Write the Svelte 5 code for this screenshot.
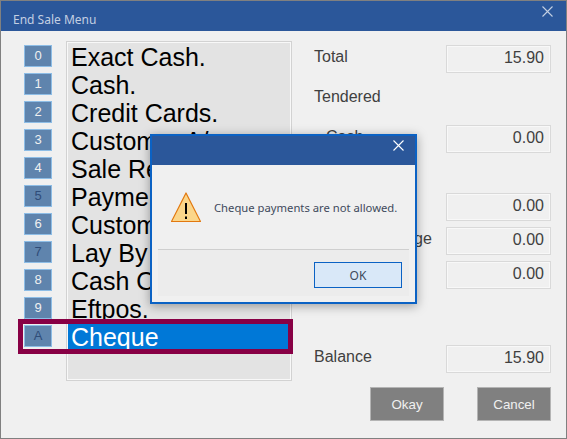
<script>
  const items = [
    { key: '0', label: 'Exact Cash.' },
    { key: '1', label: 'Cash.' },
    { key: '2', label: 'Credit Cards.' },
    { key: '3', label: 'Customer A/c.' },
    { key: '4', label: 'Sale Returns.' },
    { key: '5', label: 'Payment Plan.', off: true },
    { key: '6', label: 'Customer Deposit.' },
    { key: '7', label: 'Lay By Payment.', off: true },
    { key: '8', label: 'Cash Out.' },
    { key: '9', label: 'Eftpos.' },
    { key: 'A', label: 'Cheque', off: true, selected: true }
  ];
</script>

<div class="window">
  <header class="titlebar">
    <span class="title">End Sale Menu</span>
    <svg class="close dim" viewBox="0 0 11 11" width="11" height="11"><path d="M.5.5l10 10M10.5.5l-10 10" /></svg>
  </header>

  <main class="body">
    <div class="keys">
      {#each items as item}
        <div class="key" class:off={item.off}>{item.key}</div>
      {/each}
    </div>

    <div class="list">
      {#each items as item}
        <div class="row" class:selected={item.selected}>{item.label}</div>
      {/each}
    </div>

    <div class="totals">
      <div class="line total"><span>Total</span><output>15.90</output></div>
      <div class="line tendered"><span>Tendered</span></div>
      <div class="line cash indent"><span>Cash</span><output>0.00</output></div>
      <div class="line r1 indent"><span></span><output>0.00</output></div>
      <div class="line r2 indent"><span>Tender Charge</span><output>0.00</output></div>
      <div class="line r2 indent"><span></span><output>0.00</output></div>
      <div class="line balance"><span>Balance</span><output>15.90</output></div>
      <div class="actions">
        <button>Okay</button>
        <button>Cancel</button>
      </div>
    </div>
  </main>

  <div class="highlight"></div>

  <div class="dialog">
    <header class="dialog-title">
      <svg class="close" viewBox="0 0 11 11" width="11" height="11"><path d="M.5.5l10 10M10.5.5l-10 10" /></svg>
    </header>
    <div class="message">
      <svg class="warn" viewBox="0 0 30 30" width="30" height="30">
        <path class="tri" d="M15 1L29.5 29.5H.5Z" />
        <path class="bang" d="M15 11v11M15 24.5v2.5" />
      </svg>
      <p>Cheque payments are not allowed.</p>
    </div>
    <footer class="dialog-foot">
      <button class="ok">OK</button>
    </footer>
  </div>
</div>

<style>
  :global(body) {
    margin: 0;
    background: #f0f0f0;
  }
  .window {
    position: relative;
    box-sizing: border-box;
    width: 567px;
    height: 439px;
    border: 1px solid #808080;
    background: #f0f0f0;
    font-family: "Liberation Sans", Arial, sans-serif;
    overflow: hidden;
  }
  .titlebar {
    display: flex;
    align-items: center;
    justify-content: space-between;
    height: 30px;
    padding: 0 13px 0 12px;
    background: #2b579a;
  }
  .title {
    color: #c3cfe2;
    font: 12px "Noto Sans", sans-serif;
    position: relative;
    top: 3px;
  }
  .close {
    fill: none;
    stroke: #fff;
    stroke-width: 1.1;
  }
  .close.dim {
    stroke: #c3cfe2;
    margin-top: -9px;
  }
  .body {
    display: flex;
    padding-top: 10px;
  }
  .keys {
    display: flex;
    flex-direction: column;
    gap: 6px;
    width: 28px;
    margin: 4px 0 0 23px;
  }
  .key {
    box-sizing: border-box;
    width: 28px;
    height: 22px;
    border: 1px solid #8dbde6;
    background: #5f84ad;
    color: #f0f0f0;
    font-size: 13px;
    line-height: 20px;
    text-align: center;
  }
  .key.off {
    color: #2f4c78;
  }
  .list {
    box-sizing: border-box;
    width: 226px;
    height: 340px;
    margin-left: 14px;
    padding-top: 1px;
    background: #e3e3e3;
    border: 1px solid #d2d2d2;
    box-shadow: inset 0 0 0 1px #f8f8f8;
  }
  .row {
    box-sizing: border-box;
    height: 28px;
    padding: 0 0 0 3px;
    margin-left: 1px;
    margin-right: 1px;
    color: #000;
    font-size: 25px;
    line-height: 28px;
    white-space: nowrap;
    overflow: hidden;
  }
  .row.selected {
    background: #0078d7;
    color: #fff;
  }
  .totals {
    display: flex;
    flex-direction: column;
    width: 237px;
    margin: 4px 0 0 22px;
    color: #404040;
    font-size: 16px;
  }
  .line {
    display: flex;
    justify-content: space-between;
    align-items: center;
    height: 28px;
  }
  .line span {
    white-space: nowrap;
    margin-top: -5px;
  }
  .line output {
    box-sizing: border-box;
    width: 105px;
    height: 28px;
    border: 1px solid #d9d9d9;
    box-shadow: inset 0 0 0 1px #f8f8f8;
    padding-right: 6px;
    font-size: 16px;
    line-height: 24px;
    text-align: right;
  }
  .indent {
    padding-left: 12px;
  }
  .tendered { margin-top: 12px; }
  .cash { margin-top: 12px; }
  .r1 { margin-top: 40px; }
  .r2 { margin-top: 6px; }
  .balance { margin-top: 56px; }
  .actions {
    display: flex;
    justify-content: flex-end;
    gap: 33px;
    margin-top: 14px;
  }
  .actions button {
    box-sizing: border-box;
    width: 74px;
    height: 34px;
    padding: 0;
    border: 1px solid #b4b4b4;
    background: #808080;
    color: #f0f0f0;
    font: 13.33px "Liberation Sans", Arial, sans-serif;
  }
  .highlight {
    position: absolute;
    left: 17px;
    top: 318px;
    width: 275px;
    height: 35px;
    box-sizing: border-box;
    border: 5px solid #880045;
    pointer-events: none;
  }
  .dialog {
    position: absolute;
    left: 149px;
    top: 133px;
    box-sizing: border-box;
    width: 267px;
    height: 170px;
    border: 2px solid #0b62c4;
    background: #f0f0f0;
    box-shadow: 0 2px 10px rgba(0, 0, 0, 0.35);
    display: flex;
    flex-direction: column;
  }
  .dialog-title {
    box-sizing: border-box;
    display: flex;
    justify-content: flex-end;
    align-items: flex-start;
    flex: none;
    height: 29px;
    padding: 4px 11px 0 0;
    background: #2b579a;
  }
  .message {
    display: flex;
    align-items: center;
    gap: 13px;
    flex: none;
    height: 84px;
    padding-left: 19px;
  }
  .warn {
    flex: none;
  }
  .tri {
    fill: #fbd68a;
    stroke: #e2780f;
    stroke-width: 1.2;
    stroke-linejoin: round;
  }
  .bang {
    fill: none;
    stroke: #000;
    stroke-width: 2;
  }
  .message p {
    margin: 0;
    color: #404a5c;
    font: 11.25px "Noto Sans", sans-serif;
    white-space: nowrap;
  }
  .dialog-foot {
    box-sizing: border-box;
    display: flex;
    justify-content: flex-end;
    align-items: flex-start;
    flex: none;
    height: 47px;
    margin: 0 6px;
    padding: 12px 7px 0 0;
    border-top: 1px solid #cfcfcf;
    background: #ececec;
  }
  .ok {
    box-sizing: border-box;
    width: 88px;
    height: 26px;
    padding: 0;
    border: 1px solid #0b62c4;
    background: #d9e8f8;
    color: #404a5c;
    font: 12px "Noto Sans", sans-serif;
  }
</style>
